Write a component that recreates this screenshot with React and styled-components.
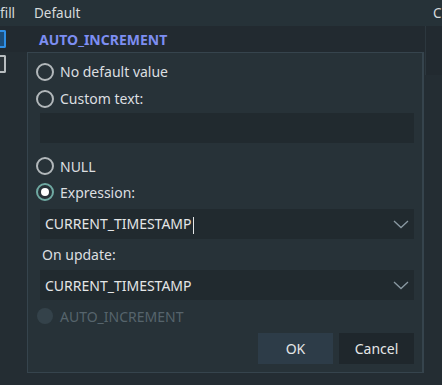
import React from "react";
import styled, { createGlobalStyle } from "styled-components";

const Global = createGlobalStyle`
  html, body { margin: 0; padding: 0; background: #242d33; }
  body { font-family: "Noto Sans", "Open Sans", sans-serif; }
`;

const Screen = styled.div`
  position: relative;
  width: 442px;
  height: 385px;
  overflow: hidden;
  background: #242d33;
  color: #dcdfe0;
  font-size: 14px;
`;

const Header = styled.div`
  display: grid;
  grid-template-columns: 27px 398px 1fr;
  height: 26px;
  background: #263238;
  align-items: center;
`;

const HeadCell = styled.div`
  padding-left: ${(p) => p.$pad || 0}px;
  white-space: nowrap;
  overflow: hidden;
  font-size: 13.5px;
  color: #d6dadc;
`;

const Row = styled.div`
  display: grid;
  grid-template-columns: 27px 398px 1fr;
  height: ${(p) => p.$h}px;
  background: ${(p) => p.$bg};
  align-items: center;
`;

const Check = styled.div`
  width: 4px;
  height: 14px;
  border: 2px solid ${(p) => (p.$on ? "#2f8fe6" : "#b8bdc0")};
  border-left: none;
  background: ${(p) => (p.$on ? "#1c4f7d" : "#2c3439")};
  border-radius: 0 2px 2px 0;
`;

const AutoInc = styled.div`
  padding-left: 12px;
  font-weight: 700;
  font-size: 14px;
  color: #7d8ef2;
`;

const SideCell = styled.div`
  height: 100%;
  border-left: 1px solid #2c373e;
  background: ${(p) => p.$bg || "transparent"};
`;

const Popup = styled.div`
  position: absolute;
  left: 27px;
  top: 52px;
  width: 397px;
  height: 321px;
  background: #273238;
  border: 1px solid #36444d;
  border-right-width: 2px;
  box-sizing: border-box;
  padding: 5px 8px 0 8px;
  display: flex;
  flex-direction: column;
`;

const RadioRow = styled.label`
  display: flex;
  align-items: center;
  gap: 6px;
  height: ${(p) => p.$h || 27}px;
  margin-top: ${(p) => p.$mt || 0}px;
  color: ${(p) => (p.$disabled ? "#56646c" : "#dcdfe0")};
  font-size: 14px;
`;

const Circle = styled.span`
  box-sizing: border-box;
  width: 18px;
  height: 18px;
  border-radius: 50%;
  border: 2px solid ${(p) => (p.$checked ? "#6fa9a2" : "#b2b8bb")};
  display: flex;
  align-items: center;
  justify-content: center;
  flex: none;
  ${(p) =>
    p.$disabled &&
    `border: none; background: #34424a; width: 16px; height: 16px; margin: 0 1px;`}
  &::after {
    content: "";
    display: ${(p) => (p.$checked ? "block" : "none")};
    width: 8px;
    height: 8px;
    border-radius: 50%;
    background: #ffffff;
  }
`;

const Field = styled.div`
  margin-left: 4px;
  margin-top: ${(p) => p.$mt || 0}px;
  height: 30px;
  background: #212a2f;
  display: flex;
  align-items: center;
  justify-content: space-between;
  padding: 0 5px;
  font-size: 14px;
  color: #e4e6e7;
`;

const Caret = styled.span`
  display: inline-block;
  width: 1px;
  height: 17px;
  background: #e4e6e7;
  vertical-align: middle;
  margin-left: 1px;
`;

const Label = styled.div`
  height: 22px;
  margin-top: 4px;
  display: flex;
  align-items: center;
  padding-left: 6px;
  font-size: 14px;
  color: #dcdfe0;
`;

const Buttons = styled.div`
  display: flex;
  justify-content: flex-end;
  gap: 6px;
  margin-top: 4px;
`;

const Button = styled.button`
  width: 75px;
  height: 31px;
  border: none;
  font-family: inherit;
  font-size: 14px;
  color: #e4e6e7;
  background: ${(p) => (p.$primary ? "#2d3c48" : "#1f272c")};
`;

const Chevron = () => (
  <svg width="16" height="9" viewBox="0 0 16 9" fill="none">
    <path d="M1 1 L8 7.5 L15 1" stroke="#8a99a2" strokeWidth="1.3" />
  </svg>
);

export default function App() {
  return (
    <>
      <Global />
      <Screen>
        <Header>
          <HeadCell>fill</HeadCell>
          <HeadCell $pad={7}>Default</HeadCell>
          <HeadCell $pad={8}>C</HeadCell>
        </Header>
        <Row $h={26} $bg="#222a30">
          <Check $on />
          <AutoInc>AUTO_INCREMENT</AutoInc>
          <SideCell />
        </Row>
        <Row $h={23} $bg="#242d33">
          <Check />
          <div />
          <SideCell $bg="#222a30" />
        </Row>

        <Popup>
          <RadioRow>
            <Circle />
            No default value
          </RadioRow>
          <RadioRow>
            <Circle />
            Custom text:
          </RadioRow>
          <Field $mt={1} />
          <RadioRow $h={26} $mt={10}>
            <Circle />
            NULL
          </RadioRow>
          <RadioRow $h={26}>
            <Circle $checked />
            Expression:
          </RadioRow>
          <Field $mt={4}>
            <span>
              CURRENT_TIMESTAMP
              <Caret />
            </span>
            <Chevron />
          </Field>
          <Label>On update:</Label>
          <Field $mt={5}>
            <span>CURRENT_TIMESTAMP</span>
            <Chevron />
          </Field>
          <RadioRow $h={26} $mt={3} $disabled>
            <Circle $disabled />
            AUTO_INCREMENT
          </RadioRow>
          <Buttons>
            <Button $primary>OK</Button>
            <Button>Cancel</Button>
          </Buttons>
        </Popup>
      </Screen>
    </>
  );
}
